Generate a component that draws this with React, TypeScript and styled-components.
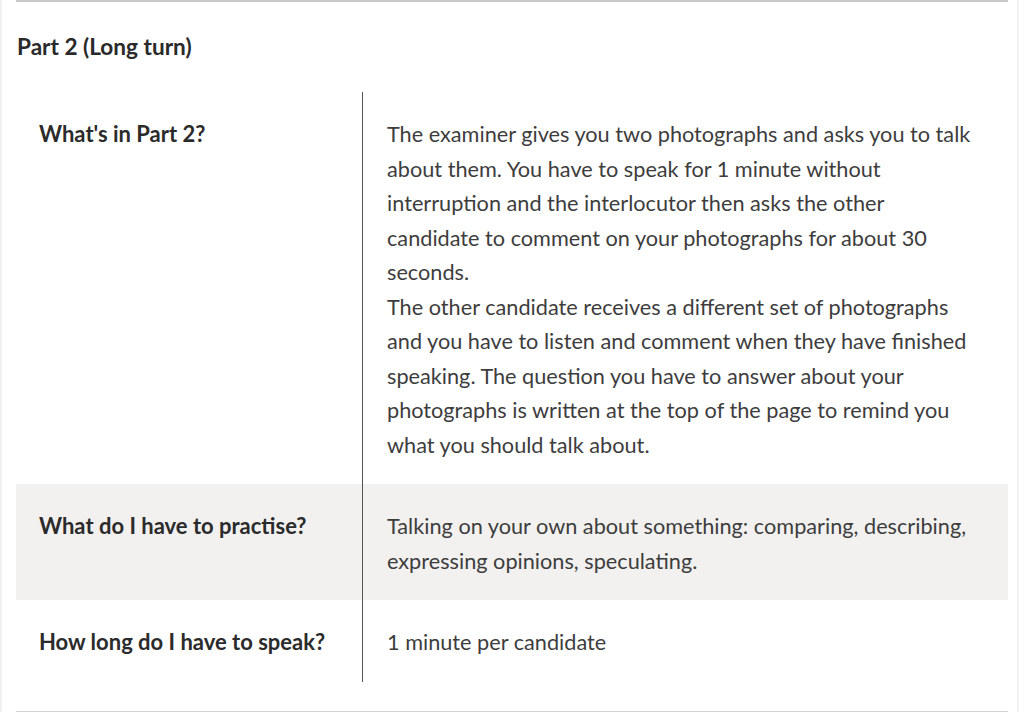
import React from 'react'
import styled, { createGlobalStyle } from 'styled-components'

const GlobalStyle = createGlobalStyle`
  html, body {
    margin: 0;
    padding: 0;
    background: #fff;
  }
  body {
    font-family: Lato, "Open Sans", sans-serif;
    color: #3b3b3b;
  }
`

const Page = styled.div`
  width: 1019px;
  min-height: 712px;
  box-sizing: border-box;
  border-left: 2px solid #f1f1f1;
  border-right: 2px solid #f1f1f1;
  padding: 0 9px 0 14px;
`

const Rule = styled.hr`
  margin: 0;
  border: 0;
  border-top: 2px solid #c9c9c9;
`

const Heading = styled.h3`
  margin: 30px 0 0 1px;
  font-size: 22.6px;
  line-height: 30px;
  font-weight: 700;
  color: #2a2a2a;
`

const Table = styled.div`
  margin-top: 30px;
  display: grid;
  grid-template-columns: 347px 1fr;
`

interface RowProps {
  shaded?: boolean
}
const Label = styled.div<RowProps>`
  padding: 25px 20px 22px 23px;
  border-right: 1.5px solid #555;
  background: ${p => (p.shaded ? '#f2f1f0' : 'transparent')};
  font-size: 22px;
  line-height: 34.5px;
  font-weight: 700;
  color: #2b2b2b;
`

const Value = styled.div<RowProps>`
  padding: 25px 36px 22px 24px;
  background: ${p => (p.shaded ? '#f2f1f0' : 'transparent')};
  font-size: 21.7px;
  line-height: 34.5px;
  color: #3d3d3d;
  p {
    margin: 0;
  }
`

const BottomRule = styled(Rule)`
  margin-top: 29px;
  border-top-color: #d4d4d4;
`

const rows: { label: string; text: string[]; shaded?: boolean }[] = [
  {
    label: "What's in Part 2?",
    text: [
      'The examiner gives you two photographs and asks you to talk about them. You have to speak for 1 minute without interruption and the interlocutor then asks the other candidate to comment on your photographs for about 30 seconds.',
      'The other candidate receives a different set of photographs and you have to listen and comment when they have finished speaking. The question you have to answer about your photographs is written at the top of the page to remind you what you should talk about.',
    ],
  },
  {
    label: 'What do I have to practise?',
    text: ['Talking on your own about something: comparing, describing, expressing opinions, speculating.'],
    shaded: true,
  },
  {
    label: 'How long do I have to speak?',
    text: ['1 minute per candidate'],
  },
]

export default function App() {
  return (
    <>
      <GlobalStyle />
      <Page>
        <Rule />
        <Heading>Part 2 (Long turn)</Heading>
        <Table>
          {rows.map(r => (
            <React.Fragment key={r.label}>
              <Label shaded={r.shaded}>{r.label}</Label>
              <Value shaded={r.shaded}>
                {r.text.map((t, i) => (
                  <p key={i}>{t}</p>
                ))}
              </Value>
            </React.Fragment>
          ))}
        </Table>
        <BottomRule />
      </Page>
    </>
  )
}
